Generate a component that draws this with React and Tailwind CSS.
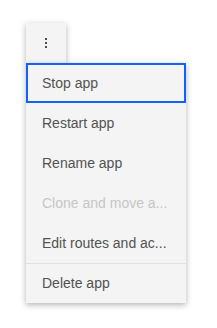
import { useState } from 'react';

const items = [
  { label: 'Stop app', focused: true },
  { label: 'Restart app' },
  { label: 'Rename app' },
  { label: 'Clone and move a...', disabled: true },
  { label: 'Edit routes and ac...' },
  { label: 'Delete app', divider: true },
];

function OverflowIcon() {
  return (
    <svg width="16" height="16" viewBox="0 0 32 32" fill="#161616">
      <circle cx="16" cy="8" r="2" />
      <circle cx="16" cy="16" r="2" />
      <circle cx="16" cy="24" r="2" />
    </svg>
  );
}

export default function App() {
  const [open] = useState(true);

  return (
    <div className="min-h-[328px] bg-white pl-[26px] pt-[23px] font-['Liberation_Sans',Arial,sans-serif]">
      <div className="flex flex-col">
        <button
          type="button"
          className="flex h-10 w-10 items-center justify-center bg-[#f4f4f4] shadow-[0_2px_6px_rgba(0,0,0,0.3)]"
        >
          <OverflowIcon />
        </button>

        {open && (
          <ul className="relative w-40 bg-[#f4f4f4] shadow-[0_2px_6px_rgba(0,0,0,0.3)]">
            {items.map((item) => (
              <li
                key={item.label}
                className={`h-10 ${item.divider ? 'border-t border-[#e0e0e0]' : ''}`}
              >
                <button
                  type="button"
                  disabled={item.disabled}
                  className={`flex h-full w-full items-center whitespace-nowrap px-4 text-left text-[14px] ${
                    item.focused ? 'border-2 border-[#0f62fe] pl-[14px]' : ''
                  } ${item.disabled ? 'text-[#c6c6c6]' : 'text-[#525252]'}`}
                >
                  {item.label}
                </button>
              </li>
            ))}
          </ul>
        )}
      </div>
    </div>
  );
}
